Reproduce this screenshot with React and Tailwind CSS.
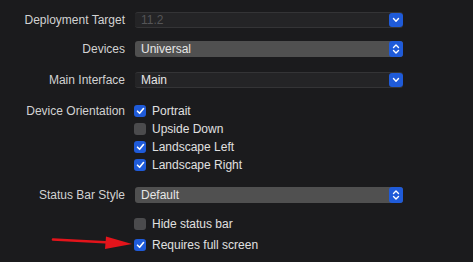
import React from "react";

function Chevron({ double }) {
  return (
    <svg width="8" height={double ? 10 : 6} viewBox={double ? "0 0 8 10" : "0 0 8 6"} fill="none" stroke="white" strokeWidth="1.4" strokeLinecap="round" strokeLinejoin="round">
      {double ? (
        <>
          <path d="M1.5 3.5 L4 1 L6.5 3.5" />
          <path d="M1.5 6.5 L4 9 L6.5 6.5" />
        </>
      ) : (
        <path d="M1.5 1.5 L4 4.2 L6.5 1.5" />
      )}
    </svg>
  );
}

function Select({ value, double, active, disabled }) {
  return (
    <div className={`flex h-[16px] w-[268px] items-stretch rounded-[3px] ${active ? "bg-[#505050]" : "bg-[#242426] border-y border-[#343436]"}`}>
      <div className={`flex-1 flex items-center pl-[6px] text-[12px] leading-none ${disabled ? "text-[#555557]" : "text-[#e6e6e6]"}`}>{value}</div>
      <div className="w-[14px] rounded-[3px] bg-[#1f5bd9] flex items-center justify-center">
        <Chevron double={double} />
      </div>
    </div>
  );
}

function Check({ checked, label }) {
  return (
    <div className="flex items-center gap-[6px] h-[18px]">
      <div className={`w-[12px] h-[12px] rounded-[3px] flex items-center justify-center ${checked ? "bg-[#1f5bd9]" : "bg-[#4b4b4d]"}`}>
        {checked && (
          <svg width="9" height="8" viewBox="0 0 9 8" fill="none" stroke="white" strokeWidth="1.6" strokeLinecap="round" strokeLinejoin="round">
            <path d="M1.5 4.2 L3.6 6.3 L7.5 1.5" />
          </svg>
        )}
      </div>
      <span className="text-[12px] text-[#e0e0e0] leading-none">{label}</span>
    </div>
  );
}

export default function App() {
  return (
    <div className="relative w-[473px] h-[262px] bg-[#1b1b1d] overflow-hidden" style={{ fontFamily: '"Liberation Sans", Arial, sans-serif' }}>
      <div className="flex flex-col pt-[12px]">
        <div className="flex items-center h-[15px]">
          <div className="w-[125px] text-right text-[12px] text-[#d2d2d2] leading-none">Deployment Target</div>
          <div className="ml-[10px]"><Select value="11.2" disabled /></div>
        </div>
        <div className="flex items-center h-[16px] mt-[14px]">
          <div className="w-[125px] text-right text-[12px] text-[#d2d2d2] leading-none">Devices</div>
          <div className="ml-[10px]"><Select value="Universal" double active /></div>
        </div>
        <div className="flex items-center h-[16px] mt-[15px]">
          <div className="w-[125px] text-right text-[12px] text-[#d2d2d2] leading-none">Main Interface</div>
          <div className="ml-[10px]"><Select value="Main" /></div>
        </div>
        <div className="flex mt-[14px]">
          <div className="w-[125px] text-right text-[12px] text-[#d2d2d2] leading-none h-[18px] flex items-center justify-end">Device Orientation</div>
          <div className="ml-[9px] flex flex-col">
            <Check checked label="Portrait" />
            <Check label="Upside Down" />
            <Check checked label="Landscape Left" />
            <Check checked label="Landscape Right" />
          </div>
        </div>
        <div className="flex items-center h-[16px] mt-[13px]">
          <div className="w-[125px] text-right text-[12px] text-[#d2d2d2] leading-none">Status Bar Style</div>
          <div className="ml-[10px]"><Select value="Default" double active /></div>
        </div>
        <div className="flex flex-col ml-[134px] mt-[12px] gap-[3px]">
          <Check label="Hide status bar" />
          <Check checked label="Requires full screen" />
        </div>
      </div>
      <svg className="absolute left-0 top-0" width="473" height="262" viewBox="0 0 473 262">
        <path d="M53 239.5 L110 242.5" stroke="#e3141b" strokeWidth="2.6" strokeLinecap="round" />
        <path d="M106 236.5 L132 244 L105 249 Z" fill="#e3141b" />
      </svg>
    </div>
  );
}
